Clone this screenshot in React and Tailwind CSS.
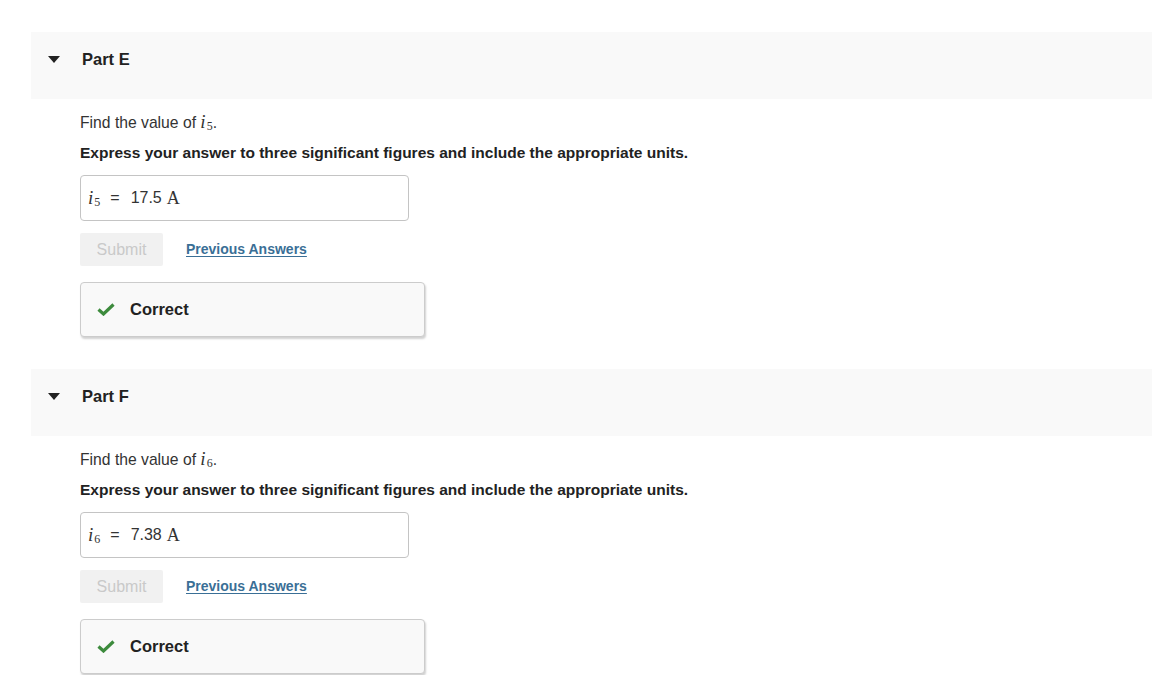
import React from "react";

const parts = [
  { id: "E", sub: "5", value: "17.5" },
  { id: "F", sub: "6", value: "7.38" },
];

const Var = ({ sub }) => (
  <span className="font-['Liberation_Serif',serif]">
    <span className="italic text-[19px]">i</span>
    <sub className="text-[12px] ml-[1px] relative top-[2px]">{sub}</sub>
  </span>
);

const Check = () => (
  <svg width="18" height="13" viewBox="0 0 18 13" className="shrink-0">
    <path d="M1.5 6.5 L6.5 11 L16.5 1.5" fill="none" stroke="#3d8b3d" strokeWidth="3.2" />
  </svg>
);

const Part = ({ part }) => (
  <section className="mb-[32px]">
    <div className="h-[67px] bg-[#f9f9f9] flex items-start pt-[17px] pl-[17px]">
      <svg width="12" height="7" viewBox="0 0 12 7" className="mt-[7px]">
        <path d="M0 0 H12 L6 7 Z" fill="#222" />
      </svg>
      <span className="ml-[22px] leading-[20px] text-[16.5px] font-semibold text-[#222]">Part {part.id}</span>
    </div>
    <div className="pl-[49px]">
      <p className="mt-[13px] h-[20px] leading-[20px] text-[15.7px] text-[#333]">
        Find the value of <Var sub={part.sub} />.
      </p>
      <p className="mt-[11px] h-[20px] leading-[20px] text-[15.5px] font-bold text-[#222]">
        Express your answer to three significant figures and include the appropriate units.
      </p>
      <div className="mt-[12px] w-[329px] h-[46px] border border-[#c4c4c4] rounded-[4px] flex items-center pl-[7px] text-[16px] text-[#333]">
        <Var sub={part.sub} />
        <span className="ml-[10px]">=</span>
        <span className="ml-[11px]">{part.value}</span>
        <span className="ml-[5px] font-['Liberation_Serif',serif] text-[18px]">A</span>
      </div>
      <div className="mt-[12px] flex items-center">
        <div className="w-[83px] h-[33px] bg-[#f1f1f1] rounded-[2px] flex items-center justify-center text-[16px] text-[#c9c9c9]">
          Submit
        </div>
        <a className="ml-[23px] text-[14px] font-bold text-[#3a6f96] underline underline-offset-2">Previous Answers</a>
      </div>
      <div className="mt-[16px] w-[345px] h-[55px] bg-[#f9f9f9] border border-[#cccccc] rounded-[4px] shadow-[1px_2px_2px_rgba(0,0,0,0.18)] flex items-center pl-[16px]">
        <Check />
        <span className="ml-[15px] text-[16.5px] font-semibold text-[#222]">Correct</span>
      </div>
    </div>
  </section>
);

export default function App() {
  return (
    <div className="bg-white min-h-[675px] pt-[32px] pl-[31px] font-['Liberation_Sans',Arial,sans-serif] overflow-hidden">
      {parts.map((p) => (
        <Part key={p.id} part={p} />
      ))}
    </div>
  );
}
